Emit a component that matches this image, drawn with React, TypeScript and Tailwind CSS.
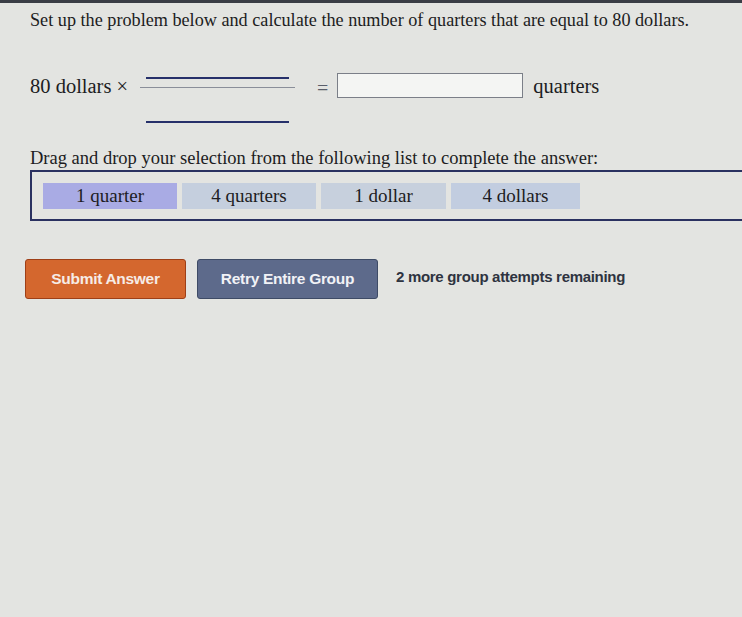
const tiles = [
  { label: '1 quarter', className: 'w-[134px] bg-[#a9abe4]' },
  { label: '4 quarters', className: 'w-[134px] bg-[#c5cfde]' },
  { label: '1 dollar', className: 'w-[125px] bg-[#c7d0dd]' },
  { label: '4 dollars', className: 'w-[129px] bg-[#c2cde0]' },
]

const App = () => {
  return (
    <div className="flex h-[617px] w-[742px] flex-col overflow-hidden bg-[#e3e4e1] font-['Liberation_Serif',serif] text-[#1c1c22]">
      <div className="h-[3px] w-full bg-[#3a3d45]" />

      <div className="flex flex-col pl-[30px]">
        <p className="mt-[6px] text-[18.2px] leading-[22px]">
          Set up the problem below and calculate the number of quarters that are equal to 80 dollars.
        </p>

        <div className="mt-[39px] flex h-[53px] items-start">
          <span className="mt-[4px] w-[110px] text-[20.5px] leading-[24px]">80 dollars ×</span>
          <div className="flex w-[155px] flex-col items-center">
            <div className="mt-[7px] h-[2px] w-[143px] bg-[#26306a]" />
            <div className="mt-[8px] h-px w-full bg-[#8a8e99]" />
            <div className="mt-[33px] h-[2px] w-[143px] bg-[#26306a]" />
          </div>
          <span className="ml-[22px] mt-[6px] text-[20px] leading-[24px] text-[#5a5e6a]">=</span>
          <div className="ml-[9px] mt-[3px] h-[25px] w-[186px] border border-[#7b7f88] bg-[#f4f5f3]" />
          <span className="ml-[10px] mt-[4px] text-[20.5px] leading-[24px]">quarters</span>
        </div>

        <p className="mt-[24px] text-[18.5px] leading-[22px]">
          Drag and drop your selection from the following list to complete the answer:
        </p>

        <div className="mt-[1px] flex h-[51px] items-center border-y-2 border-l-2 border-[#2a3160] pl-[11px]">
          {tiles.map((tile, i) => (
            <div
              key={tile.label}
              className={`flex h-[26px] items-center justify-center pt-[2px] text-[19px] ${tile.className} ${i > 0 ? 'ml-[5px]' : ''}`}
            >
              {tile.label}
            </div>
          ))}
        </div>
      </div>

      <div className="ml-[25px] mt-[38px] flex items-center font-['Liberation_Sans',sans-serif]">
        <button className="h-[40px] w-[161px] rounded-[3px] border border-[#9e3f17] bg-[#d4672e] text-[15.5px] font-bold tracking-[-0.3px] text-[#f6ece6]">
          Submit Answer
        </button>
        <button className="ml-[11px] h-[40px] w-[181px] rounded-[3px] border border-[#3e4b66] bg-[#5d6a8b] text-[15.5px] font-bold tracking-[-0.3px] text-[#f1f2f6]">
          Retry Entire Group
        </button>
        <span className="mb-[4px] ml-[18px] text-[15px] font-bold tracking-[-0.3px] text-[#2e3340]">
          2 more group attempts remaining
        </span>
      </div>
    </div>
  )
}

export default App
